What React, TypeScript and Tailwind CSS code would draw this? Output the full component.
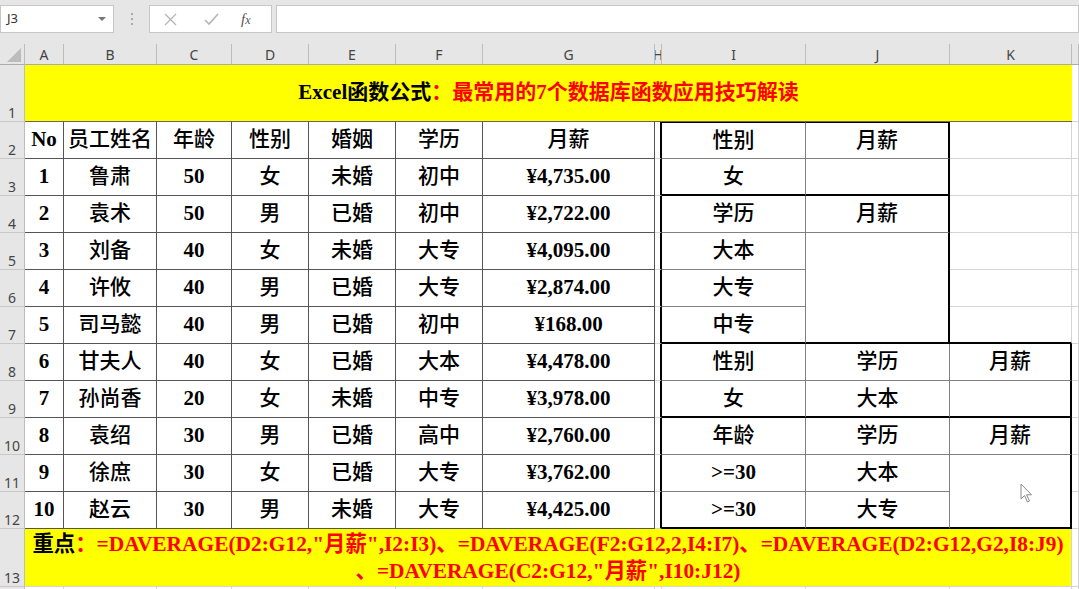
const COLS =
  'grid grid-cols-[25px_39px_93px_75px_77px_87px_87px_172px_7px_144px_144px_122px_7px]';

const SERIF = "font-['Liberation_Serif','Noto_Sans_CJK_SC',serif]";

const letters = ['A', 'B', 'C', 'D', 'E', 'F', 'G', 'H', 'I', 'J', 'K', ''];

const data = [
  ['No', '员工姓名', '年龄', '性别', '婚姻', '学历', '月薪'],
  ['1', '鲁肃', '50', '女', '未婚', '初中', '¥4,735.00'],
  ['2', '袁术', '50', '男', '已婚', '初中', '¥2,722.00'],
  ['3', '刘备', '40', '女', '未婚', '大专', '¥4,095.00'],
  ['4', '许攸', '40', '男', '已婚', '大专', '¥2,874.00'],
  ['5', '司马懿', '40', '男', '已婚', '初中', '¥168.00'],
  ['6', '甘夫人', '40', '女', '已婚', '大本', '¥4,478.00'],
  ['7', '孙尚香', '20', '女', '未婚', '中专', '¥3,978.00'],
  ['8', '袁绍', '30', '男', '已婚', '高中', '¥2,760.00'],
  ['9', '徐庶', '30', '女', '已婚', '大专', '¥3,762.00'],
  ['10', '赵云', '30', '男', '未婚', '大专', '¥4,425.00'],
];

const light = 'border-r border-r-[#d4d4d4] border-b border-b-[#d4d4d4]';
const mid = 'border-r border-r-[#808080] border-b border-b-[#808080]';
const midEnd = 'border-r-2 border-r-black border-b border-b-[#808080]';
const low = 'border-r border-r-[#808080] border-b-2 border-b-black';
const lowEnd = 'border-r-2 border-r-black border-b-2 border-b-black';
const openEnd = 'border-r-2 border-r-black';

type Crit = [string, string];

const criteria: Crit[][] = [
  [
    ['性别', 'border-t border-t-black border-r border-r-[#808080] border-b border-b-[#808080]'],
    ['月薪', 'border-t border-t-black border-r-2 border-r-black border-b border-b-[#808080]'],
    ['', light],
  ],
  [['女', low], ['', lowEnd], ['', light]],
  [['学历', mid], ['月薪', midEnd], ['', light]],
  [['大本', mid], ['', openEnd], ['', light]],
  [['大专', mid], ['', openEnd], ['', light]],
  [['中专', low], ['', lowEnd], ['', 'border-r border-r-[#d4d4d4] border-b-2 border-b-black']],
  [['性别', mid], ['学历', mid], ['月薪', midEnd]],
  [['女', low], ['大本', low], ['', lowEnd]],
  [['年龄', mid], ['学历', mid], ['月薪', midEnd]],
  [['>=30', mid], ['大本', mid], ['', openEnd]],
  [['>=30', low], ['大专', low], ['', lowEnd]],
];

// chinese-only cells get a lighter weight, numbers stay bold
const weight = (s: string) => (/[0-9A-Za-z>=]/.test(s) ? 'font-bold' : 'font-medium');

function RowHead({ n }: { n?: number }) {
  return (
    <div className="flex items-end justify-center border-r border-b border-r-[#bdbdbd] border-b-[#c8c8c8] bg-[#e6e6e6] pb-[1px] font-['Noto_Sans',sans-serif] text-[14px] leading-none text-[#444]">
      {n}
    </div>
  );
}

function Toolbar() {
  return (
    <div className="flex h-[44px] items-start bg-[#e6e6e6] pt-[5px]">
      <div className="flex h-[28px] w-[114px] items-center justify-between border border-[#c6c6c6] bg-white pl-[6px] pr-[7px] font-['Noto_Sans',sans-serif] text-[13px] text-[#333]">
        <span>J3</span>
        <span className="h-0 w-0 border-x-[4px] border-t-[4px] border-x-transparent border-t-[#777]" />
      </div>
      <div className="flex w-[35px] flex-col items-center gap-[3px] pt-[8px]">
        <span className="h-[2px] w-[2px] bg-[#aaa]" />
        <span className="h-[2px] w-[2px] bg-[#aaa]" />
        <span className="h-[2px] w-[2px] bg-[#aaa]" />
      </div>
      <div className="flex h-[28px] w-[123px] items-center border border-[#c6c6c6] bg-white">
        <svg className="ml-[14px]" width="13" height="13" viewBox="0 0 13 13">
          <path d="M1 1L12 12M12 1L1 12" stroke="#b4b4b4" strokeWidth="1.3" fill="none" />
        </svg>
        <svg className="ml-[27px]" width="15" height="13" viewBox="0 0 15 13">
          <path d="M1 7L5 11L14 1" stroke="#b4b4b4" strokeWidth="1.6" fill="none" />
        </svg>
        <span className="ml-[22px] font-['Liberation_Serif',serif] text-[15px] italic leading-none text-[#555]">
          f<span className="text-[12px]">x</span>
        </span>
      </div>
      <div className="ml-[4px] h-[28px] flex-1 border border-[#c6c6c6] bg-white" />
    </div>
  );
}

function ColumnHeader() {
  return (
    <div className={`${COLS} h-[21px] bg-[#e6e6e6]`}>
      <div className="flex items-end justify-end border-r border-b border-r-[#bdbdbd] border-b-[#ababab] pb-[2px] pr-[3px]">
        <svg width="14" height="14" viewBox="0 0 14 14">
          <path d="M14 0L14 14L0 14Z" fill="#bcbcbc" />
        </svg>
      </div>
      {letters.map((l, i) => (
        <div
          key={i}
          className="flex items-center justify-center overflow-hidden border-r border-b border-r-[#bdbdbd] border-b-[#ababab] font-['Noto_Sans',sans-serif] text-[14px] text-[#444]"
        >
          {l}
        </div>
      ))}
    </div>
  );
}

export default function App() {
  return (
    <div className="relative h-[589px] w-[1079px] overflow-hidden bg-white">
      <Toolbar />
      <ColumnHeader />

      <div className={`${COLS} h-[57px]`}>
        <RowHead n={1} />
        <div
          className={`col-span-11 flex items-center justify-center border-b border-b-[#666] bg-[#ffff00] ${SERIF} text-[21px] font-bold text-black`}
        >
          Excel函数公式<span className="text-[#ff0000]">：最常用的7个数据库函数应用技巧解读</span>
        </div>
        <div className={light} />
      </div>

      {data.map((row, r) => (
        <div key={r} className={`${COLS} h-[37px]`}>
          <RowHead n={r + 2} />
          {row.map((v, c) => (
            <div
              key={c}
              className={`flex items-center justify-center whitespace-nowrap border-r border-b border-r-[#555] border-b-[#555] ${SERIF} text-[21px] ${weight(v)} text-black`}
            >
              {v}
            </div>
          ))}
          <div className="border-r-2 border-b border-r-black border-b-[#d4d4d4]" />
          {criteria[r].map(([t, cls], c) => (
            <div
              key={c}
              className={`flex items-center justify-center ${cls} ${SERIF} text-[21px] ${weight(t)} text-black`}
            >
              {t}
            </div>
          ))}
          <div className={light} />
        </div>
      ))}

      <div className={`${COLS} h-[58px]`}>
        <RowHead n={13} />
        <div
          className={`col-span-11 flex flex-col items-center justify-center border-r border-b border-r-[#d4d4d4] border-b-[#d4d4d4] bg-[#ffff00] ${SERIF} text-[21.4px] font-bold leading-[27px] text-[#ff0000]`}
        >
          <div className="whitespace-nowrap">
            <span className="text-black">重点</span>：=DAVERAGE(D2:G12,"月薪",I2:I3)、=DAVERAGE(F2:G12,2,I4:I7)、=DAVERAGE(D2:G12,G2,I8:J9)
          </div>
          <div className="whitespace-nowrap">、=DAVERAGE(C2:G12,"月薪",I10:J12)</div>
        </div>
        <div className={light} />
      </div>

      <div className={`${COLS} h-[37px]`}>
        <RowHead />
        {letters.map((_, i) => (
          <div key={i} className={light} />
        ))}
      </div>

      <svg
        className="absolute left-[1020px] top-[483px]"
        width="13"
        height="20"
        viewBox="0 0 13 20"
      >
        <path
          d="M1 1L1 16L4.5 12.5L7.5 19L9.5 18L6.5 11.8L11.5 11.8Z"
          fill="white"
          stroke="#8a8a8a"
          strokeWidth="1"
          strokeLinejoin="round"
        />
      </svg>
    </div>
  );
}
